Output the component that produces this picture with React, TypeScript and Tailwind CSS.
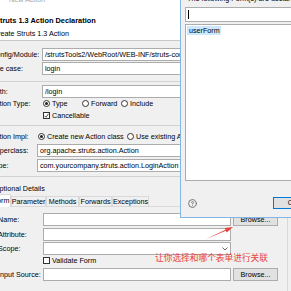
import React from 'react';

const Field = ({ value = '', className = '' }: { value?: string; className?: string }) => (
  <div
    className={`h-[13px] bg-white border border-[#acacac] flex items-center pl-[2px] whitespace-nowrap overflow-hidden ${className}`}
  >
    {value}
  </div>
);

const Radio = ({ checked = false }: { checked?: boolean }) => (
  <span className="w-[7px] h-[7px] rounded-full border border-[#333] bg-white flex items-center justify-center shrink-0">
    {checked && <span className="w-[3px] h-[3px] rounded-full bg-[#222]" />}
  </span>
);

const Check = ({ checked = false }: { checked?: boolean }) => (
  <span className="w-[7px] h-[7px] border border-[#333] bg-white flex items-center justify-center shrink-0">
    {checked && (
      <svg width="5" height="5" viewBox="0 0 10 10">
        <path d="M1 5.5 L4 8.5 L9 1.5" fill="none" stroke="#222" strokeWidth="1.6" />
      </svg>
    )}
  </span>
);

const BrowseButton = () => (
  <div className="ml-[2px] w-[45px] h-[13px] bg-[#e1e1e1] border border-[#adadad] flex items-center justify-center">
    Browse...
  </div>
);

const Tab = ({ label, width, active = false }: { label: string; width: string; active?: boolean }) =>
  active ? (
    <div className={`${width} h-[13px] -mb-px relative z-10 bg-white border-x border-t border-[#d9d9d9] flex items-center justify-center`}>
      {label}
    </div>
  ) : (
    <div className={`${width} h-[10px] bg-[#f0f0f0] border-x border-t border-[#d9d9d9] flex items-center justify-center`}>
      {label}
    </div>
  );

export default function App() {
  return (
    <div className="relative w-[291px] h-[291px] overflow-hidden bg-[#f0f0f0] font-['Liberation_Sans',Arial,sans-serif] text-[7.2px] leading-none text-black">
      <div className="-ml-[9px] w-[310px]">
        {/* wizard header */}
        <div className="h-[46px] bg-white border-b border-[#c9c9c9]">
          <div className="h-[9px] -mt-[5px] pl-[18px] flex items-center text-[#a3a3a3]">New Action</div>
          <div className="mt-[12px] h-[9px] pl-[4px] flex items-center font-bold text-[7.4px]">Struts 1.3 Action Declaration</div>
          <div className="mt-[4px] h-[9px] pl-[2px] flex items-center">Create Struts 1.3 Action</div>
        </div>

        {/* module / use case */}
        <div className="mt-[7px] flex items-center h-[13px]">
          <div className="w-[51px] shrink-0 whitespace-nowrap">Config/Module:</div>
          <Field value="/strutsTools2/WebRoot/WEB-INF/struts-config.xml" className="w-[250px]" />
        </div>
        <div className="mt-px flex items-center h-[13px]">
          <div className="w-[51px] shrink-0">Use case:</div>
          <Field value="login" className="w-[250px]" />
        </div>
        <div className="mt-[6px] h-px bg-[#d2d2d2]" />

        {/* path / type */}
        <div className="mt-[3px] flex items-center h-[13px]">
          <div className="w-[51px] shrink-0">Path:</div>
          <Field value="/login" className="w-[250px]" />
        </div>
        <div className="mt-px flex items-center h-[9px]">
          <div className="w-[52px] shrink-0 whitespace-nowrap">Action Type:</div>
          <div className="w-[39px] flex items-center gap-[2px]">
            <Radio checked />
            <span>Type</span>
          </div>
          <div className="w-[39px] flex items-center gap-[2px]">
            <Radio />
            <span>Forward</span>
          </div>
          <div className="flex items-center gap-[2px]">
            <Radio />
            <span>Include</span>
          </div>
        </div>
        <div className="mt-[3px] flex items-center h-[9px] pl-[52px] gap-[2px]">
          <Check checked />
          <span>Cancellable</span>
        </div>
        <div className="mt-[5px] h-px bg-[#d2d2d2]" />

        {/* implementation */}
        <div className="mt-[6px] flex items-center h-[9px]">
          <div className="w-[47px] shrink-0 whitespace-nowrap">Action Impl:</div>
          <div className="w-[89px] flex items-center gap-[2px]">
            <Radio checked />
            <span>Create new Action class</span>
          </div>
          <div className="flex items-center gap-[2px] whitespace-nowrap">
            <Radio />
            <span>Use existing Action class</span>
          </div>
        </div>
        <div className="mt-[3px] flex items-center h-[13px]">
          <div className="w-[46px] shrink-0">Superclass:</div>
          <Field value="org.apache.struts.action.Action" className="w-[255px]" />
        </div>
        <div className="mt-[2px] flex items-center h-[13px]">
          <div className="w-[46px] shrink-0">Type:</div>
          <Field value="com.yourcompany.struts.action.LoginAction" className="w-[255px]" />
        </div>
        <div className="mt-[4px] h-px bg-[#d2d2d2]" />

        {/* optional details */}
        <div className="mt-[7px] h-[9px] pl-[3px] flex items-center">Optional Details</div>
        <div className="mt-px h-[12px] flex items-end">
          <Tab label="Form" width="w-[20px]" active />
          <Tab label="Parameter" width="w-[35px]" />
          <Tab label="Methods" width="w-[33px]" />
          <Tab label="Forwards" width="w-[33px]" />
          <Tab label="Exceptions" width="w-[37px]" />
        </div>
        <div className="w-[297px] h-[90px] border-t border-r border-[#d9d9d9] pt-[6px] pl-[7px]">
          <div className="flex items-center h-[13px]">
            <div className="w-[45px] shrink-0">Name:</div>
            <Field className="w-[188px]" />
            <BrowseButton />
          </div>
          <div className="mt-[2px] flex items-center h-[13px]">
            <div className="w-[45px] shrink-0">Attribute:</div>
            <Field className="w-[188px]" />
          </div>
          <div className="mt-px flex items-center h-[13px]">
            <div className="w-[45px] shrink-0">Scope:</div>
            <div className="w-[188px] h-[13px] bg-white border border-[#acacac] flex items-center justify-end pr-[2px]">
              <svg width="6" height="4" viewBox="0 0 6 4">
                <path d="M0.5 0.5 L3 3 L5.5 0.5" fill="none" stroke="#555" strokeWidth="0.9" />
              </svg>
            </div>
          </div>
          <div className="mt-px flex items-center h-[9px] pl-[45px] gap-[2px]">
            <Check />
            <span>Validate Form</span>
          </div>
          <div className="mt-[3px] flex items-center h-[13px]">
            <div className="w-[45px] shrink-0 whitespace-nowrap">Input Source:</div>
            <Field className="w-[188px]" />
            <BrowseButton />
          </div>
        </div>
      </div>

      {/* form selection dialog over the wizard */}
      <div className="absolute left-[180px] top-0 w-[130px] h-[218px] bg-[#f0f0f0] border-l border-b border-[#84b5e3] pl-[4px]">
        <div className="-mt-[6px] h-[9px] pl-[2px] flex items-center whitespace-nowrap">
          The following Form(s) are declared in the configuration:
        </div>
        <div className="mt-[4px] h-[15px] bg-white border border-[#acacac] flex items-center pl-[2px]">
          <span className="w-px h-[9px] bg-black" />
        </div>
        <div className="mt-[2px] h-[157px] bg-white border border-[#acacac] pt-px pl-px">
          <div className="w-[34px] h-[9px] bg-[#cce8ff] flex items-center pl-[2px]">userForm</div>
        </div>
        <div className="mt-[16px] h-[12px] flex items-center">
          <svg className="ml-[3px] shrink-0" width="9" height="9" viewBox="0 0 24 24" fill="none" stroke="#6a6a6a" strokeWidth="2.4" strokeLinecap="round">
            <circle cx="12" cy="12" r="10.5" />
            <path d="M9.09 9a3 3 0 0 1 5.83 1c0 2-3 3-3 3" />
            <path d="M12 17h.01" />
          </svg>
          <div className="ml-[76px] w-[40px] shrink-0 h-[12px] bg-[#e1e1e1] border border-[#0078d7] flex items-center justify-center">
            OK
          </div>
        </div>
      </div>

      {/* red annotation */}
      <svg className="absolute left-0 top-0 pointer-events-none" width="291" height="291">
        <polygon
          points="205,239.5 225.9,230.8 226.7,232.6 233,227 224.7,228 225.5,229.8"
          fill="#e8413a"
        />
      </svg>
      <div className="absolute left-[155px] top-[253px] text-[8.7px] leading-[10px] text-[#e8413a] whitespace-nowrap font-['Noto_Sans_CJK_SC',sans-serif]">
        让你选择和哪个表单进行关联
      </div>
    </div>
  );
}
